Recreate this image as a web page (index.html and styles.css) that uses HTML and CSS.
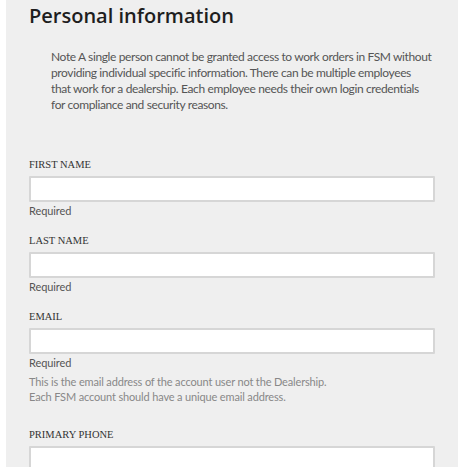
FILE: index.html
```html
<!DOCTYPE html>
<html>
<head>
<meta charset="utf-8">
<link rel="stylesheet" href="styles.css">
</head>
<body>
<div class="panel">
  <h1 class="title">Personal information</h1>
  <p class="note">Note A single person cannot be granted access to work orders in FSM without<br>providing individual specific information. There can be multiple employees<br>that work for a dealership. Each employee needs their own login credentials<br>for compliance and security reasons.</p>
  <div class="field first">
    <label class="label">FIRST NAME</label>
    <div class="input"></div>
    <div class="req">Required</div>
  </div>
  <div class="field">
    <label class="label">LAST NAME</label>
    <div class="input"></div>
    <div class="req">Required</div>
  </div>
  <div class="field">
    <label class="label">EMAIL</label>
    <div class="input"></div>
    <div class="req">Required</div>
    <div class="help">This is the email address of the account user not the Dealership.<br>Each FSM account should have a unique email address.</div>
  </div>
  <div class="field phone">
    <label class="label">PRIMARY PHONE</label>
    <div class="input"></div>
  </div>
</div>
</body>
</html>
```
FILE: styles.css
```css
html, body {
  margin: 0;
  padding: 0;
  background: #ffffff;
  overflow: hidden;
}
.panel {
  margin-left: 6px;
  width: 452px;
  box-sizing: border-box;
  height: 467px;
  overflow: hidden;
  background: #efefef;
  padding: 3px 23px 0 23px;
}
.title {
  margin: 0;
  font-family: "Open Sans", sans-serif;
  font-weight: 600;
  font-size: 20px;
  line-height: 26px;
  color: #1e1e1e;
}
.note {
  margin: 20px 0 0 22px;
  white-space: nowrap;
  font-family: Lato, sans-serif;
  font-size: 12px;
  letter-spacing: -0.38px;
  line-height: 16px;
  color: #555555;
}
.field {
  display: flex;
  flex-direction: column;
}
.field.first {
  margin-top: 45px;
}
.field + .field {
  margin-top: 16px;
}
.label {
  font-family: "Liberation Serif", serif;
  font-size: 10.5px;
  line-height: 14px;
  color: #333333;
  margin-bottom: 4px;
}
.input {
  height: 22px;
  background: #ffffff;
  border: 2px solid #d6d6d6;
  border-radius: 1px;
}
.req {
  font-family: Lato, sans-serif;
  font-size: 11px;
  letter-spacing: -0.1px;
  line-height: 15px;
  color: #555555;
  margin-top: 1px;
}
.help {
  margin-top: 4px;
  font-family: Lato, sans-serif;
  font-size: 11px;
  letter-spacing: -0.15px;
  line-height: 15px;
  color: #888888;
}
.field.phone {
  margin-top: 24px;
}
```
